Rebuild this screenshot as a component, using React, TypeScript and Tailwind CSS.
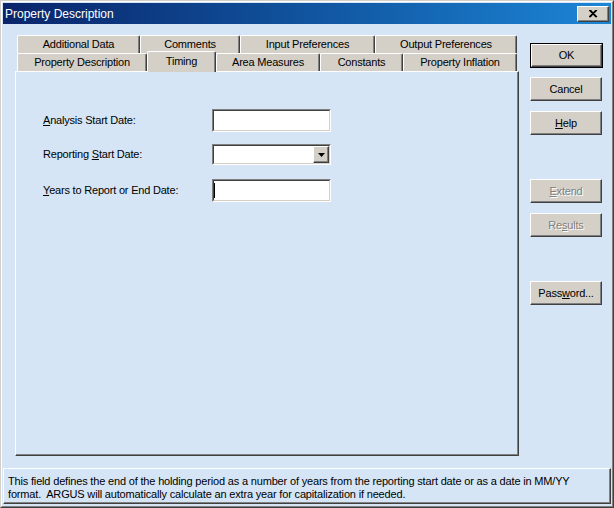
import type { ReactNode } from "react"

const row1 = [
  { label: "Additional Data", w: "w-[123px]" },
  { label: "Comments", w: "w-[100px]" },
  { label: "Input Preferences", w: "w-[135px]" },
  { label: "Output Preferences", w: "w-[142px]" },
]

const row2 = [
  { label: "Property Description", w: "w-[130px]" },
  { label: "Timing", w: "w-[69px]", active: true },
  { label: "Area Measures", w: "w-[104px]" },
  { label: "Constants", w: "w-[83px]" },
  { label: "Property Inflation", w: "w-[114px]" },
]

function Tab({ label, w, active }: { label: string; w: string; active?: boolean }) {
  return (
    <div
      className={
        active
          ? `${w} relative z-10 -mt-[2px] flex h-[21px] items-center justify-center rounded-t-[2px] border-l border-t border-r border-white border-r-[#404040] bg-[#d4d0c8] pb-[1px] shadow-[inset_-1px_0_#808080]`
          : `${w} flex h-[18px] items-center justify-center rounded-t-[2px] border-l border-t border-r border-white border-r-[#404040] bg-[#d4d0c8] shadow-[inset_-1px_0_#808080]`
      }
    >
      {label}
    </div>
  )
}

function Sunken({ className, children }: { className: string; children?: ReactNode }) {
  return (
    <div className={`${className} border border-[#808080] border-b-white border-r-white`}>
      <div className="flex h-full w-full border border-[#404040] border-b-[#d4d0c8] border-r-[#d4d0c8] bg-white">
        {children}
      </div>
    </div>
  )
}

function Button({
  children,
  isDefault,
  disabled,
  className = "",
}: {
  children: ReactNode
  isDefault?: boolean
  disabled?: boolean
  className?: string
}) {
  const face = (
    <div
      className={`flex h-full w-full items-center justify-center border border-white border-b-[#404040] border-r-[#404040] bg-[#d4d0c8] shadow-[inset_-1px_-1px_#808080] ${
        disabled ? "text-[#808080] [text-shadow:1px_1px_#ffffff]" : "text-black"
      }`}
    >
      {children}
    </div>
  )
  return isDefault ? (
    <div className={`h-[25px] w-[73px] border border-black ${className}`}>{face}</div>
  ) : (
    <div className={`h-[24px] w-[72px] ${className}`}>{face}</div>
  )
}

function Field({ children, className = "" }: { children: ReactNode; className?: string }) {
  return <div className={`flex items-center ${className}`}>{children}</div>
}

export default function App() {
  return (
    <div className="h-[508px] w-[614px] border border-[#d4d0c8] border-b-[#404040] border-r-[#404040] font-['Liberation_Sans',Arial,sans-serif] text-[11px] tracking-[-0.2px] text-black">
      <div className="h-full w-full border border-white border-b-[#808080] border-r-[#808080]">
        <div className="flex h-full w-full flex-col bg-[#d5e5f5] p-[1px]">
          {/* title bar */}
          <div className="flex h-[21px] shrink-0 items-center justify-between bg-gradient-to-r from-[#0a246a] to-[#1c86d6] pl-[2px] pr-[2px]">
            <span className="text-[12px] tracking-normal text-white">Property Description</span>
            <div className="flex h-[16px] w-[32px] items-center justify-center border border-white border-b-[#404040] border-r-[#404040] bg-[#d4d0c8] shadow-[inset_-1px_-1px_#808080]">
              <svg width="9" height="8" viewBox="0 0 9 8">
                <path d="M1 0 L8 7 M0 0 L7 7 M8 0 L1 7 M7 0 L0 7 M1.5 0 L7.5 7 M7.5 0 L1.5 7" stroke="#000" strokeWidth="1.1" />
              </svg>
            </div>
          </div>

          {/* body */}
          <div className="flex pl-[12px] pt-[11px]">
            <div className="flex h-[421px] w-[504px] flex-col">
              <div className="flex pl-[2px]">
                {row1.map((t) => (
                  <Tab key={t.label} {...t} />
                ))}
              </div>
              <div className="flex h-[18px] items-start pl-[2px]">
                {row2.map((t) => (
                  <Tab key={t.label} {...t} />
                ))}
              </div>
              <div className="flex-1 border border-white border-b-[#404040] border-r-[#404040] pl-[27px] pt-[37px] shadow-[inset_-1px_-1px_#808080]">
                <Field>
                  <div className="w-[169px]">
                    <u>A</u>nalysis Start Date:
                  </div>
                  <Sunken className="h-[23px] w-[119px]" />
                </Field>
                <Field className="mt-[12px]">
                  <div className="w-[169px]">
                    Reporting <u>S</u>tart Date:
                  </div>
                  <Sunken className="h-[21px] w-[119px]">
                    <div className="flex-1" />
                    <div className="flex h-full w-[16px] items-center justify-center border border-white border-b-[#404040] border-r-[#404040] bg-[#d4d0c8] shadow-[inset_-1px_-1px_#808080]">
                      <svg width="7" height="4" viewBox="0 0 7 4">
                        <path d="M0 0 H7 L3.5 4 Z" fill="#000" />
                      </svg>
                    </div>
                  </Sunken>
                </Field>
                <Field className="mt-[14px]">
                  <div className="w-[169px]">
                    <u>Y</u>ears to Report or End Date:
                  </div>
                  <Sunken className="h-[23px] w-[119px]">
                    <div className="flex items-center">
                      <div className="h-[15px] w-[1px] bg-black" />
                    </div>
                  </Sunken>
                </Field>
              </div>
            </div>

            <div className="ml-[11px] flex flex-col pt-[8px]">
              <Button isDefault>OK</Button>
              <Button className="mt-[9px]">Cancel</Button>
              <Button className="mt-[10px]">
                <span>
                  <u>H</u>elp
                </span>
              </Button>
              <Button disabled className="mt-[44px]">
                <span>
                  <u>E</u>xtend
                </span>
              </Button>
              <Button disabled className="mt-[10px]">
                <span>
                  Re<u>s</u>ults
                </span>
              </Button>
              <Button className="mt-[44px]">
                <span>
                  Pass<u>w</u>ord...
                </span>
              </Button>
            </div>
          </div>

          {/* status */}
          <div className="mt-[12px] h-[36px] border border-white border-b-[#404040] border-r-[#404040] pl-[4px] pt-[6px] leading-[13px] tracking-[-0.17px] whitespace-pre-wrap shadow-[inset_-1px_-1px_#808080]">
            This field defines the end of the holding period as a number of years from the reporting start date or as a date in MM/YY
            <br />
            format.  ARGUS will automatically calculate an extra year for capitalization if needed.
          </div>
        </div>
      </div>
    </div>
  )
}
